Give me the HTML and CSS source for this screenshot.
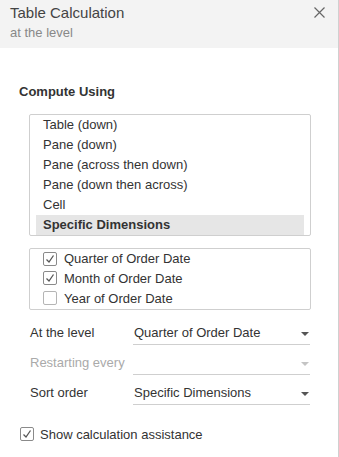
FILE: index.html
```html
<!DOCTYPE html>
<html lang="en">
<head>
    <meta charset="UTF-8">
    <title>Table Calculation</title>
    <link rel="stylesheet" href="styles.css">
</head>
<body>
    <div class="panel">
        <div class="header">
            <div class="title">Table Calculation</div>
            <div class="subtitle">at the level</div>
            <svg class="close" width="11" height="11" viewBox="0 0 11 11">
                <path d="M0.5 0.5 L10.5 10.5 M10.5 0.5 L0.5 10.5" stroke="#666" stroke-width="1.2" fill="none"/>
            </svg>
        </div>

        <div class="content">
            <div class="section-title">Compute Using</div>

            <div class="list">
                <div class="list-item">Table (down)</div>
                <div class="list-item">Pane (down)</div>
                <div class="list-item">Pane (across then down)</div>
                <div class="list-item">Pane (down then across)</div>
                <div class="list-item">Cell</div>
                <div class="list-item selected">Specific Dimensions</div>
            </div>

            <div class="checks">
                <div class="check-row">
                    <span class="box checked"><svg width="12" height="12" viewBox="0 0 12 12"><path d="M2.5 6.5 L5 9 L9.5 2.5" stroke="#555" stroke-width="1.3" fill="none"/></svg></span>
                    Quarter of Order Date
                </div>
                <div class="check-row">
                    <span class="box checked"><svg width="12" height="12" viewBox="0 0 12 12"><path d="M2.5 6.5 L5 9 L9.5 2.5" stroke="#555" stroke-width="1.3" fill="none"/></svg></span>
                    Month of Order Date
                </div>
                <div class="check-row">
                    <span class="box"></span>
                    Year of Order Date
                </div>
            </div>

            <div class="fields">
                <div class="field">
                    <div class="label">At the level</div>
                    <div class="select">Quarter of Order Date<span class="arrow"></span></div>
                </div>
                <div class="field disabled">
                    <div class="label">Restarting every</div>
                    <div class="select"><span class="arrow"></span></div>
                </div>
                <div class="field">
                    <div class="label">Sort order</div>
                    <div class="select">Specific Dimensions<span class="arrow"></span></div>
                </div>
            </div>

            <div class="assist">
                <span class="box checked"><svg width="12" height="12" viewBox="0 0 12 12"><path d="M2.5 6.5 L5 9 L9.5 2.5" stroke="#555" stroke-width="1.3" fill="none"/></svg></span>
                Show calculation assistance
            </div>
        </div>
    </div>
</body>
</html>
```

FILE: styles.css
```css
body {
    margin: 0;
    font-family: "Liberation Sans", Arial, sans-serif;
    color: #333;
    background: white;
}
.panel {
    width: 338px;
    min-height: 457px;
    border-right: 1px solid #d0d0d0;
}
.header {
    position: relative;
    height: 48px;
    box-sizing: border-box;
    padding: 3px 10px 0;
    background: #f3f3f3;
}
.title {
    font-size: 15px;
    line-height: 19px;
    color: #444;
}
.subtitle {
    font-size: 13px;
    line-height: 17px;
    color: #888;
    margin-top: 2px;
}
.close {
    position: absolute;
    top: 7px;
    left: 314px;
}
.content {
    padding: 36px 0 0 19px;
}
.section-title {
    font-size: 13px;
    font-weight: bold;
    line-height: 16px;
}
.list {
    margin: 14px 0 0 10px;
    width: 282px;
    box-sizing: border-box;
    border: 1px solid #cfcfcf;
    border-radius: 2px;
    padding: 0 6px;
    font-size: 13px;
}
.list-item {
    height: 20px;
    line-height: 20px;
    padding-left: 7px;
}
.list-item.selected {
    background: #e6e6e6;
    font-weight: bold;
}
.checks {
    margin: 12px 0 0 10px;
    width: 282px;
    box-sizing: border-box;
    border: 1px solid #cfcfcf;
    border-radius: 2px;
    padding-bottom: 1px;
    font-size: 13px;
}
.check-row {
    display: flex;
    align-items: center;
    height: 20px;
    padding-left: 13px;
}
.check-row:first-child {
    height: 19px;
}
.box {
    display: inline-flex;
    align-items: center;
    justify-content: center;
    width: 14px;
    height: 14px;
    box-sizing: border-box;
    border: 1px solid #b5b5b5;
    border-radius: 2px;
    margin-right: 7px;
    background: white;
}
.box.checked {
    border-color: #8a8a8a;
}
.fields {
    margin: 5px 0 0 11px;
    font-size: 13px;
}
.field {
    display: flex;
    height: 30px;
}
.label {
    width: 103px;
    padding-top: 6px;
    line-height: 24px;
}
.select {
    position: relative;
    width: 177px;
    box-sizing: border-box;
    border-bottom: 1px solid #cfcfcf;
    padding: 6px 0 0 1px;
    line-height: 23px;
}
.arrow {
    position: absolute;
    right: 1px;
    top: 17px;
    border-left: 4px solid transparent;
    border-right: 4px solid transparent;
    border-top: 4px solid #555;
}
.field.disabled .label {
    color: #aaa;
}
.field.disabled .arrow {
    border-top-color: #c4c4c4;
}
.assist {
    display: flex;
    align-items: center;
    margin: 19px 0 0 1px;
    height: 20px;
    font-size: 13px;
}
.assist .box {
    margin-right: 6px;
}
```
